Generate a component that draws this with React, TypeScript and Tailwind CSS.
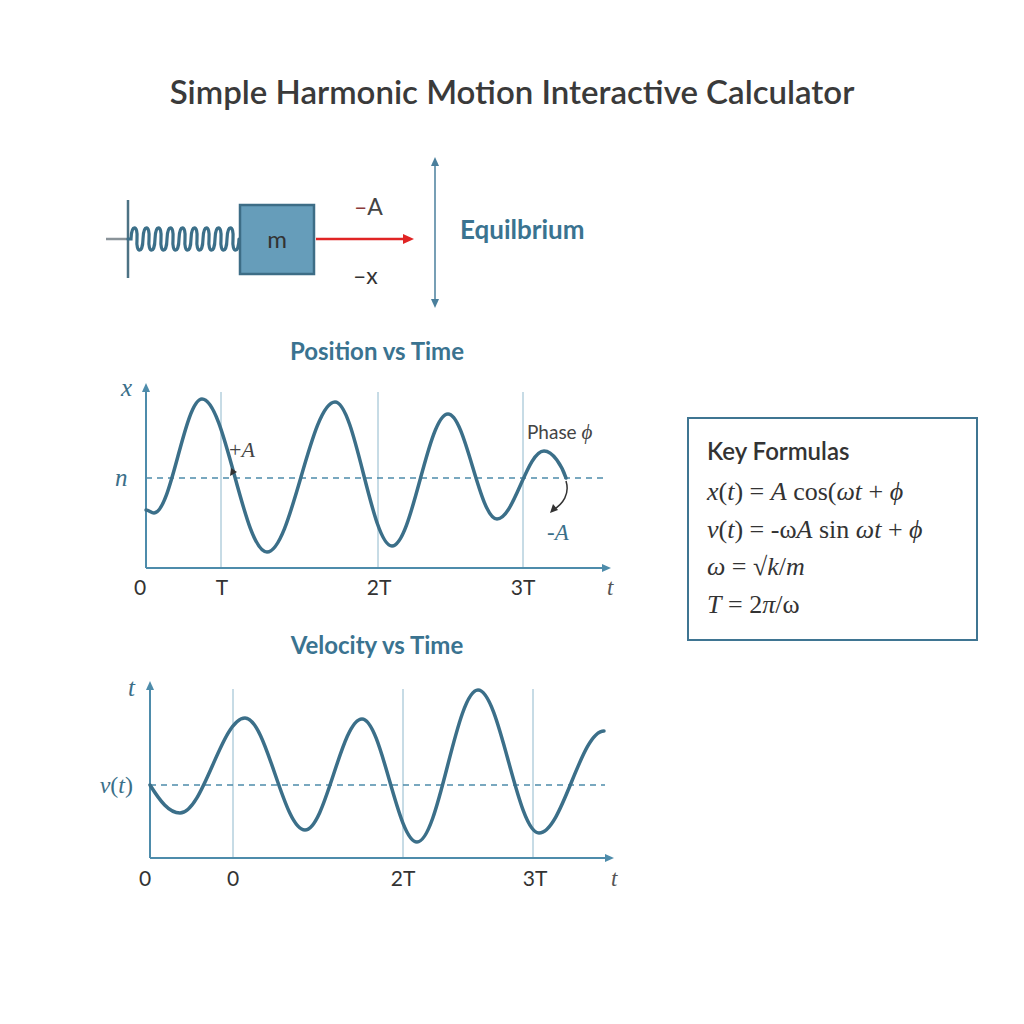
import React from "react"

type Pt = [number, number]

// smooth wave through extremes (horizontal tangents at each point)
function wave(pts: Pt[], k = 0.36) {
  let d = `M${pts[0][0]} ${pts[0][1]}`
  for (let i = 1; i < pts.length; i++) {
    const [x0, y0] = pts[i - 1]
    const [x1, y1] = pts[i]
    const dx = x1 - x0
    d += ` C${x0 + dx * k} ${y0} ${x1 - dx * k} ${y1} ${x1} ${y1}`
  }
  return d
}

function springPath() {
  const x0 = 131
  const x1 = 239
  const coils = 9
  const step = (x1 - x0) / coils
  let d = `M128 239 L${x0} 239`
  for (let i = 0; i < coils; i++) {
    const a = x0 + i * step
    d += ` C${a + step * 0.02} 224 ${a + step * 0.6} 224 ${a + step * 0.5} 239`
    d += ` C${a + step * 0.4} 254 ${a + step * 0.98} 254 ${a + step} 239`
  }
  return d
}

const TEAL = "#3b6f89"
const AXIS = "#4e8cab"
const GRID = "#8fb8cc"

function Arrowhead({ x, y, dir }: { x: number; y: number; dir: "up" | "right" }) {
  const p =
    dir === "up"
      ? `${x},${y} ${x - 4},${y + 9} ${x + 4},${y + 9}`
      : `${x},${y} ${x - 9},${y - 4} ${x - 9},${y + 4}`
  return <polygon points={p} fill={AXIS} />
}

const serif = "'Liberation Serif', 'DejaVu Serif', serif"
const sans = "Lato, sans-serif"

function SpringDiagram() {
  return (
    <svg width={560} height={170} viewBox="80 150 560 170" className="block">
      <line x1={106} y1={239} x2={128} y2={239} stroke="#8a9399" strokeWidth={2.5} />
      <line x1={128} y1={200} x2={128} y2={278} stroke="#4c7284" strokeWidth={2.5} />
      <path d={springPath()} fill="none" stroke={TEAL} strokeWidth={3.2} strokeLinecap="round" />
      <rect x={240} y={205} width={74} height={69} fill="#669dba" stroke="#3d6d86" strokeWidth={2.5} />
      <text x={277} y={248} textAnchor="middle" fontSize={24} fill="#333" fontFamily={sans}>
        m
      </text>
      <line x1={316} y1={239} x2={404} y2={239} stroke="#e02424" strokeWidth={2.5} />
      <polygon points="414,239 403,234 403,244" fill="#e02424" />
      <text x={354} y={215} fontSize={23} fill="#444" fontFamily={sans}>
        <tspan fill="#8b3a3a">–</tspan>A
      </text>
      <text x={353} y={284} fontSize={23} fill="#333" fontFamily={sans}>
        –x
      </text>
      <line x1={435} y1={165} x2={435} y2={300} stroke="#4a7f9c" strokeWidth={1.5} />
      <polygon points="435,157 431,166 439,166" fill="#4a7f9c" />
      <polygon points="435,308 431,299 439,299" fill="#4a7f9c" />
      <text x={460} y={239} fontSize={26} fontWeight={700} fill="#3a7390" fontFamily={sans}>
        Equilbrium
      </text>
    </svg>
  )
}

function PositionChart() {
  const pts: Pt[] = [
    [146, 510],
    [154, 513],
    [202, 399],
    [267, 552],
    [335, 402],
    [392, 546],
    [448, 414],
    [497, 519],
    [544, 451],
  ]
  const d = wave(pts) + " C553 451 562 466 566 478"
  return (
    <svg width={560} height={245} viewBox="80 375 560 245" className="block">
      {[221, 378, 523].map((x) => (
        <line key={x} x1={x} y1={392} x2={x} y2={568} stroke={GRID} strokeWidth={1} />
      ))}
      <line x1={146} y1={478} x2={604} y2={478} stroke={AXIS} strokeWidth={1.5} strokeDasharray="6 5" />
      <line x1={146} y1={390} x2={146} y2={568} stroke={AXIS} strokeWidth={2} />
      <line x1={146} y1={568} x2={603} y2={568} stroke={AXIS} strokeWidth={2} />
      <Arrowhead x={146} y={383} dir="up" />
      <Arrowhead x={611} y={568} dir="right" />
      <path d={d} fill="none" stroke={TEAL} strokeWidth={3.5} strokeLinecap="round" />
      <text x={121} y={396} fontSize={25} fontStyle="italic" fill={TEAL} fontFamily={serif}>
        x
      </text>
      <text x={115} y={486} fontSize={25} fontStyle="italic" fill={TEAL} fontFamily={serif}>
        n
      </text>
      <text x={229} y={457} fontSize={22} fill="#444" fontFamily={serif}>
        +<tspan fontStyle="italic">A</tspan>
      </text>
      <polygon points="230,476 231,468 237,472" fill="#333" />
      <text x={527} y={439} fontSize={19} fill="#444" fontFamily={sans}>
        Phase <tspan fontStyle="italic" fontFamily={serif} fontSize={21}>ϕ</tspan>
      </text>
      <path d="M566 481 C570 494 563 504 553 510" fill="none" stroke="#333" strokeWidth={1.5} />
      <polygon points="550,513 553,504 558,510" fill="#333" />
      <text x={547} y={540} fontSize={23} fontStyle="italic" fill={TEAL} fontFamily={serif}>
        -A
      </text>
      {[
        ["0", 140],
        ["T", 222],
        ["2T", 379],
        ["3T", 523],
      ].map(([t, x]) => (
        <text key={t as string} x={x as number} y={595} textAnchor="middle" fontSize={21} fill="#333" fontFamily={sans}>
          {t}
        </text>
      ))}
      <text x={607} y={595} fontSize={23} fontStyle="italic" fill="#555" fontFamily={serif}>
        t
      </text>
    </svg>
  )
}

function VelocityChart() {
  const pts: Pt[] = [
    [180, 813],
    [245, 718],
    [305, 830],
    [362, 719],
    [417, 842],
    [478, 690],
    [539, 833],
    [604, 731],
  ]
  const d = "M150 785 C160 801 169 813 180 813" + wave(pts).replace(/^M[^C]*/, " ")
  return (
    <svg width={560} height={230} viewBox="80 670 560 230" className="block">
      {[233, 403, 533].map((x) => (
        <line key={x} x1={x} y1={689} x2={x} y2={858} stroke={GRID} strokeWidth={1} />
      ))}
      <line x1={150} y1={785} x2={605} y2={785} stroke={AXIS} strokeWidth={1.5} strokeDasharray="6 5" />
      <line x1={150} y1={689} x2={150} y2={858} stroke={AXIS} strokeWidth={2} />
      <line x1={150} y1={858} x2={606} y2={858} stroke={AXIS} strokeWidth={2} />
      <Arrowhead x={150} y={681} dir="up" />
      <Arrowhead x={614} y={858} dir="right" />
      <path d={d} fill="none" stroke={TEAL} strokeWidth={3.5} strokeLinecap="round" />
      <text x={128} y={696} fontSize={25} fontStyle="italic" fill={TEAL} fontFamily={serif}>
        t
      </text>
      <text x={133} y={793} textAnchor="end" fontSize={24} fill={TEAL} fontFamily={serif}>
        <tspan fontStyle="italic">ν</tspan>(<tspan fontStyle="italic">t</tspan>)
      </text>
      {[
        ["a", "0", 145],
        ["b", "0", 233],
        ["c", "2T", 403],
        ["d", "3T", 535],
      ].map(([k, t, x]) => (
        <text key={k as string} x={x as number} y={886} textAnchor="middle" fontSize={21} fill="#333" fontFamily={sans}>
          {t}
        </text>
      ))}
      <text x={611} y={886} fontSize={23} fontStyle="italic" fill="#555" fontFamily={serif}>
        t
      </text>
    </svg>
  )
}

function I({ children }: { children: React.ReactNode }) {
  return <span className="italic">{children}</span>
}

function Formulas() {
  return (
    <div className="w-[291px] h-[224px] border-[2.5px] border-[#3f7592] bg-white pl-[18px] pt-[17px]">
      <h2 className="font-['Lato',sans-serif] text-[24px] font-semibold text-[#333] leading-[30px]">Key Formulas</h2>
      <div className="mt-[7px] font-['Liberation_Serif','DejaVu_Serif',serif] text-[26px] leading-[37.5px] text-[#333]">
        <div>
          <I>x</I>(<I>t</I>) = <I>A</I> cos(<I>ωt</I> + <I>ϕ</I>
        </div>
        <div>
          <I>ν</I>(<I>t</I>) = -ω<I>A</I> sin <I>ωt</I> + <I>ϕ</I>
        </div>
        <div>
          <I>ω</I> = √<I>k</I>/<I>m</I>
        </div>
        <div>
          <I>T</I> = 2<I>π</I>/ω
        </div>
      </div>
    </div>
  )
}

export default function App() {
  return (
    <div className="relative h-[1024px] w-[1024px] overflow-hidden bg-white font-['Lato',sans-serif]">
      {/* Title */}
      <h1 className="pt-[71px] h-[150px] text-center text-[33px] font-semibold leading-[40px] text-[#3a3a3a]">
        Simple Harmonic Motion Interactive Calculator
      </h1>

      <div className="flex">
        {/* Left column: diagram + charts */}
        <div className="ml-[80px] w-[560px]">
          <SpringDiagram />
          <div className="flex h-[55px] items-center justify-center pl-[34px] pt-[6px] text-[24px] font-bold text-[#3a7390]">
            Position vs Time
          </div>
          <PositionChart />
          <div className="flex h-[50px] items-center justify-center pl-[34px] text-[24px] font-bold text-[#3a7390]">
            Velocity vs Time
          </div>
          <VelocityChart />
        </div>

        {/* Right column */}
        <div className="ml-[47px] mt-[267px]">
          <Formulas />
        </div>
      </div>
    </div>
  )
}
